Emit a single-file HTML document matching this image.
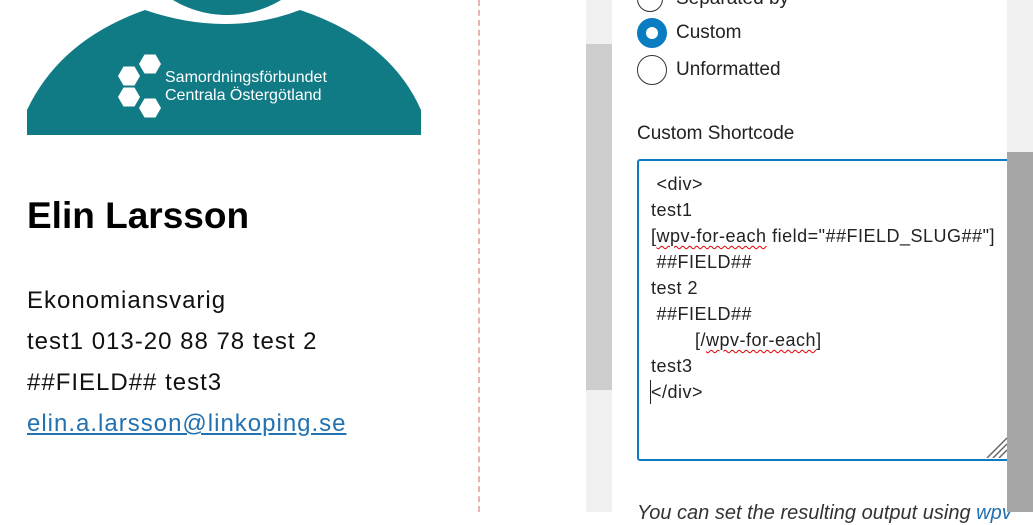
<!DOCTYPE html>
<html><head><meta charset="utf-8"><style>
*{margin:0;padding:0;box-sizing:border-box}
body{width:1033px;height:512px;overflow:hidden;background:#fff;font-family:"Liberation Sans",sans-serif;position:relative}
.a{position:absolute}
.body{font-size:24px;letter-spacing:1px;color:#111;line-height:41px}
.ta{font-size:18px;letter-spacing:0.5px;color:#222;line-height:26px;white-space:pre}
.sq{text-decoration:underline wavy #d00;text-decoration-thickness:1px;text-underline-offset:3px}
</style></head><body>
<svg class="a" style="left:0;top:0" width="440" height="140">
<circle cx="227" cy="-90" r="105" fill="#107a85"/>
<path d="M27 135 L27 110 Q60 40 145 10 Q227 38 300 10 Q390 40 421 110 L421 135 Z" fill="#107a85"/>
<g fill="#fff">
<polygon points="139,64 144.5,54.5 155.5,54.5 161,64 155.5,73.5 144.5,73.5"/>
<polygon points="118,76 123.5,66.5 134.5,66.5 140,76 134.5,85.5 123.5,85.5"/>
<polygon points="118,97 123.5,87.5 134.5,87.5 140,97 134.5,106.5 123.5,106.5"/>
<polygon points="139,108 144.5,98.5 155.5,98.5 161,108 155.5,117.5 144.5,117.5"/>
</g>
<text x="165" y="82" fill="#fff" font-size="16" font-family="Liberation Sans">Samordningsförbundet</text>
<text x="165" y="100" fill="#fff" font-size="16" font-family="Liberation Sans">Centrala Östergötland</text>
</svg>
<div class="a" style="left:478px;top:0;height:512px;border-left:2px dashed #e8b4ae"></div>
<div class="a" style="left:27px;top:195px;font-size:37px;font-weight:bold;color:#000">Elin Larsson</div>
<div class="a body" style="left:27px;top:280px">Ekonomiansvarig<br>test1 013-20 88 78 test 2<br>##FIELD## test3<br><span style="color:#2271b1;text-decoration:underline">elin.a.larsson@linkoping.se</span></div>
<div class="a" style="left:586px;top:0;width:26px;height:512px;background:#f0f0f0"></div>
<div class="a" style="left:586px;top:44px;width:26px;height:346px;background:#cdcdcd"></div>
<div class="a" style="left:1007px;top:0;width:26px;height:512px;background:#f0f0f0"></div>
<div class="a" style="left:637px;top:-14px;width:26px;height:26px;border:1.5px solid #333;border-radius:50%"></div>
<div class="a" style="left:676px;top:-12px;font-size:19px;color:#222">Separated by</div>
<div class="a" style="left:637px;top:18px;width:30px;height:30px;border:9px solid #0a7cc1;border-radius:50%;background:#fff"></div>
<div class="a" style="left:676px;top:22px;font-size:19px;color:#222">Custom</div>
<div class="a" style="left:637px;top:55px;width:30px;height:30px;border:1.5px solid #333;border-radius:50%"></div>
<div class="a" style="left:676px;top:59px;font-size:19px;color:#222">Unformatted</div>
<div class="a" style="left:637px;top:123px;font-size:19px;color:#222">Custom Shortcode</div>
<div class="a" style="left:637px;top:159px;width:380px;height:302px;border:2px solid #0a7cc1;border-radius:3px;background:#fff"></div>
<div class="a ta" style="left:651px;top:171px"> &lt;div&gt;
test1
[<span class="sq">wpv-for-each</span> field="##FIELD_SLUG##"]
 ##FIELD##
test 2
 ##FIELD##
        [/<span class="sq">wpv-for-each</span>]
test3
&lt;/div&gt;</div>
<div class="a" style="left:650px;top:380px;width:1px;height:24px;background:#222"></div>
<svg class="a" style="left:985px;top:436px" width="22" height="22"><g stroke="#666" stroke-width="1.5"><line x1="2" y1="22" x2="22" y2="2"/><line x1="8" y1="22" x2="22" y2="8"/><line x1="14" y1="22" x2="22" y2="14"/></g></svg>
<div class="a" style="left:637px;top:502px;font-size:20px;font-style:italic;color:#333;white-space:nowrap">You can set the resulting output using <span style="color:#2271b1">wpv</span></div>
<div class="a" style="left:1007px;top:152px;width:26px;height:360px;background:#a6a6a6"></div>
</body></html>
